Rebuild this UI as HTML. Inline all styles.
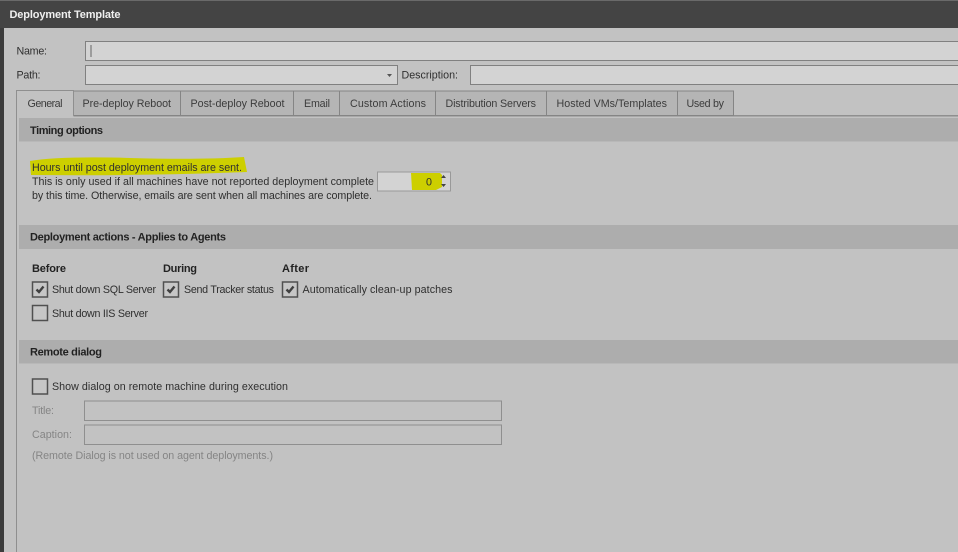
<!DOCTYPE html>
<html>
<head>
<meta charset="utf-8">
<title>Deployment Template</title>
<style>
html,body{margin:0;padding:0;width:958px;height:552px;overflow:hidden;background:#c2c2c2}
svg{display:block;filter:blur(0.3px)}
text{font-family:"Liberation Sans",sans-serif;font-size:10.7px;fill:#2f2f2f}
.b{font-weight:bold;font-size:11px;fill:#222}
.t{fill:#3c3c3c}
.d{fill:#858585}
</style>
</head>
<body>
<svg width="958" height="552" viewBox="0 0 958 552" xmlns="http://www.w3.org/2000/svg">
  <rect x="0" y="0" width="958" height="552" fill="#c2c2c2"/>
  <rect x="0" y="0" width="4" height="552" fill="#3c3c3c"/>
  <rect x="0" y="0" width="958" height="28" fill="#444"/>
  <rect x="0" y="0" width="958" height="1" fill="#6a6a6a"/>
  <text x="9.500" y="18" textLength="111" class="b" style="fill:#f0f0f0">Deployment Template</text>

  <text x="16.500" y="54.500" textLength="30.500">Name:</text>
  <rect x="85.500" y="41.500" width="880" height="19" fill="#d3d3d3" stroke="#808080"/>
  <rect x="90.500" y="45" width="1" height="12" fill="#666"/>

  <text x="16.500" y="78.500" textLength="24">Path:</text>
  <rect x="85.500" y="65.500" width="312" height="19" fill="#d3d3d3" stroke="#808080"/>
  <path d="M387 74h5l-2.500 3z" fill="#555"/>
  <text x="401.500" y="78.500" textLength="56.500">Description:</text>
  <rect x="470.500" y="65.500" width="495" height="19" fill="#d3d3d3" stroke="#808080"/>

  <!-- tabs -->
  <rect x="16" y="115" width="942" height="1.500" fill="#8f8f8f"/>
  <g fill="#b5b5b5" stroke="#858585">
    <rect x="73.500" y="91" width="107" height="24.500"/>
    <rect x="180.500" y="91" width="113" height="24.500"/>
    <rect x="293.500" y="91" width="46" height="24.500"/>
    <rect x="339.500" y="91" width="96" height="24.500"/>
    <rect x="435.500" y="91" width="111" height="24.500"/>
    <rect x="546.500" y="91" width="131" height="24.500"/>
    <rect x="677.500" y="91" width="56" height="24.500"/>
  </g>
  <path d="M16.500 552V90.500H73.500V116" fill="#c2c2c2" stroke="#8f8f8f"/>
  <rect x="17" y="114" width="56" height="4" fill="#c2c2c2"/>
  <text x="27.500" y="107" textLength="35" class="t">General</text>
  <text x="82.500" y="107" textLength="88.500" class="t">Pre-deploy Reboot</text>
  <text x="190.500" y="107" textLength="94" class="t">Post-deploy Reboot</text>
  <text x="304" y="107" textLength="26" class="t">Email</text>
  <text x="350" y="107" textLength="76" class="t">Custom Actions</text>
  <text x="445.500" y="107" textLength="90.500" class="t">Distribution Servers</text>
  <text x="556.500" y="107" textLength="110.500" class="t">Hosted VMs/Templates</text>
  <text x="686.500" y="107" textLength="37.500" class="t">Used by</text>

  <!-- Timing options -->
  <rect x="19" y="118" width="939" height="23.500" fill="#adadad"/>
  <text x="30" y="134" textLength="73" class="b">Timing options</text>
  <path d="M30 161Q60 156 130 158T244 157L247 172Q150 176 31 175Z" fill="#cdcf00"/>
  <text x="32" y="171" textLength="210">Hours until post deployment emails are sent.</text>
  <text x="32" y="185" textLength="342">This is only used if all machines have not reported deployment complete</text>
  <text x="32" y="199" textLength="340">by this time. Otherwise, emails are sent when all machines are complete.</text>
  <rect x="377.500" y="172" width="73" height="19" fill="#d3d3d3" stroke="#999"/>
  <path d="M411 173H440L442 175V187L436 190H412Z" fill="#cdcf00"/>
  <text x="426" y="185.500" textLength="5.500">0</text>
  <path d="M441 178l2.500-3 2.500 3zM441 184l2.500 3 2.500-3z" fill="#444"/>

  <!-- Deployment actions -->
  <rect x="19" y="225" width="939" height="24" fill="#adadad"/>
  <text x="30" y="240.500" textLength="196" class="b">Deployment actions - Applies to Agents</text>
  <text x="32" y="272" textLength="34" class="b">Before</text>
  <text x="163" y="272" textLength="34" class="b">During</text>
  <text x="282" y="272" textLength="27" class="b">After</text>

  <g fill="#c6c6c6" stroke="#505050" stroke-width="1.500">
    <rect x="32.500" y="282" width="15" height="15"/>
    <rect x="163.500" y="282" width="15" height="15"/>
    <rect x="282.500" y="282" width="15" height="15"/>
    <rect x="32.500" y="305.500" width="15" height="15"/>
    <rect x="32.500" y="379" width="15" height="15"/>
  </g>
  <g fill="none" stroke="#404040" stroke-width="2.400">
    <path d="M36.500 289.500l2.500 2.500 4.500-5.500"/>
    <path d="M167.500 289.500l2.500 2.500 4.500-5.500"/>
    <path d="M286.500 289.500l2.500 2.500 4.500-5.500"/>
  </g>
  <text x="52" y="293" textLength="104">Shut down SQL Server</text>
  <text x="184" y="293" textLength="90">Send Tracker status</text>
  <text x="302.500" y="293" textLength="150">Automatically clean-up patches</text>
  <text x="52" y="317" textLength="96">Shut down IIS Server</text>

  <!-- Remote dialog -->
  <rect x="19" y="340" width="939" height="23.500" fill="#adadad"/>
  <text x="30" y="355.500" textLength="72" class="b">Remote dialog</text>
  <text x="52" y="390" textLength="236">Show dialog on remote machine during execution</text>
  <text x="32" y="414" textLength="22" class="d">Title:</text>
  <rect x="84.500" y="401" width="417" height="19.500" fill="#c2c2c2" stroke="#8f8f8f"/>
  <text x="32" y="438" textLength="40" class="d">Caption:</text>
  <rect x="84.500" y="425" width="417" height="19.500" fill="#c2c2c2" stroke="#8f8f8f"/>
  <text x="32" y="459" textLength="241" class="d">(Remote Dialog is not used on agent deployments.)</text>
</svg>
</body>
</html>
